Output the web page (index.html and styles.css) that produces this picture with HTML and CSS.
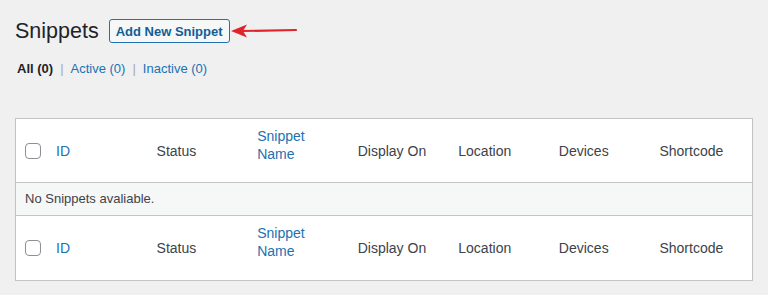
FILE: index.html
```html
<!DOCTYPE html>
<html>
<head>
<meta charset="utf-8">
<link rel="stylesheet" href="styles.css">
</head>
<body>
<div class="wrap">
  <div class="heading">
    <h1 class="title">Snippets</h1>
    <a class="add-btn">Add New Snippet</a>
    <svg class="arrow" width="68" height="16" viewBox="0 0 68 16">
      <line x1="12" y1="8" x2="66" y2="7" stroke="#e0242a" stroke-width="2.2" stroke-linecap="round"/>
      <path d="M1 8 L17 1.5 L13 8 L17 14.5 Z" fill="#e0242a"/>
    </svg>
  </div>
  <ul class="subsubsub">
    <li class="current">All (0)</li>
    <li class="sep">|</li>
    <li class="link">Active (0)</li>
    <li class="sep">|</li>
    <li class="link">Inactive (0)</li>
  </ul>
  <div class="table">
    <div class="row head">
      <div class="cell check"><span class="cb"></span></div>
      <div class="cell link">ID</div>
      <div class="cell">Status</div>
      <div class="cell link sortable">Snippet Name</div>
      <div class="cell">Display On</div>
      <div class="cell">Location</div>
      <div class="cell">Devices</div>
      <div class="cell">Shortcode</div>
    </div>
    <div class="empty">No Snippets avaliable.</div>
    <div class="row head foot">
      <div class="cell check"><span class="cb"></span></div>
      <div class="cell link">ID</div>
      <div class="cell">Status</div>
      <div class="cell link sortable">Snippet Name</div>
      <div class="cell">Display On</div>
      <div class="cell">Location</div>
      <div class="cell">Devices</div>
      <div class="cell">Shortcode</div>
    </div>
  </div>
</div>
</body>
</html>
```
FILE: styles.css
```css
html, body {
  margin: 0;
  padding: 0;
  background: #f0f0f1;
  font-family: "Liberation Sans", Arial, sans-serif;
  color: #3c434a;
}
.wrap {
  padding: 19px 15px 0 15px;
}
.heading {
  display: flex;
  align-items: center;
  height: 24px;
}
.title {
  margin: 0;
  font-size: 21.5px;
  font-weight: 400;
  color: #1d2327;
  line-height: 24px;
  margin-right: 10px;
}
.add-btn {
  box-sizing: border-box;
  height: 24px;
  display: inline-flex;
  align-items: center;
  padding: 0 6px;
  border: 1px solid #2271b1;
  border-radius: 3px;
  background: #f6f7f7;
  color: #135e96;
  font-weight: 700;
  font-size: 13px;
}
.arrow {
  margin-left: 0px;
  margin-top: -1px;
}
.subsubsub {
  list-style: none;
  margin: 0;
  padding: 0;
  display: flex;
  gap: 7px;
  font-size: 13px;
  margin-top: 18px;
  margin-left: 2px;
  line-height: 16px;
}
.subsubsub .current {
  color: #1d2327;
  font-weight: 700;
}
.subsubsub .sep {
  color: #a7aaad;
}
.subsubsub .link {
  color: #2271b1;
}
.table {
  margin-top: 41px;
  width: 738px;
  box-sizing: border-box;
  background: #fff;
  border: 1px solid #c3c4c7;
  box-shadow: 0 1px 1px rgba(0,0,0,0.04);
}
.row {
  display: grid;
  grid-template-columns: 32px repeat(7, 1fr);
  align-items: center;
  height: 63px;
}
.foot {
  height: 64px;
}
.cell {
  font-size: 14px;
  line-height: 18px;
  padding: 0 8px;
  color: #3c434a;
}
.cell.link {
  color: #2271b1;
}
.cell.sortable {
  padding-bottom: 12px;
}
.cell.check {
  padding: 0 0 0 9px;
  display: flex;
  align-items: center;
}
.cb {
  display: block;
  width: 16px;
  height: 16px;
  box-sizing: border-box;
  border: 1px solid #8c8f94;
  border-radius: 4px;
  background: #fff;
}
.empty {
  height: 34px;
  box-sizing: border-box;
  border-top: 1px solid #c3c4c7;
  border-bottom: 1px solid #c3c4c7;
  background: #f6f7f7;
  font-size: 13px;
  line-height: 32px;
  padding-left: 9px;
  color: #3c434a;
}
```
